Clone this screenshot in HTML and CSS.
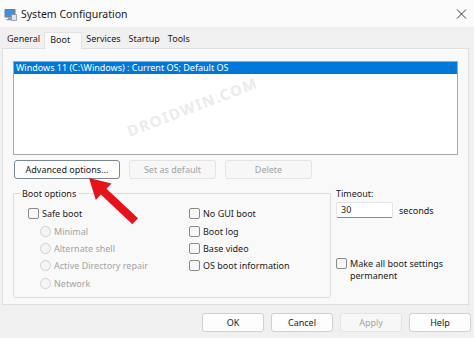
FILE: index.html
```html
<!DOCTYPE html>
<html lang="en">
<head>
    <meta charset="UTF-8">
    <meta name="viewport" content="width=device-width, initial-scale=1.0">
    <title>System Configuration</title>
    <link rel="stylesheet" href="styles.css">
</head>
<body>
    <div class="window">
        <header class="titlebar">
            <svg class="app-icon" width="13" height="13" viewBox="0 0 13 13">
                <rect x="0.5" y="1" width="11" height="8.5" rx="1" fill="#6d7f95"/>
                <rect x="1.8" y="2.2" width="8.4" height="6" fill="#3d8fe0"/>
                <rect x="4" y="9.5" width="4" height="1.5" fill="#8a97a6"/>
                <rect x="2.5" y="11" width="7" height="1.3" fill="#8a97a6"/>
                <path d="M7.5 6.5 L12.5 6.5 L12.5 12.5 L7.5 12.5 Z" fill="#dfe5ec" stroke="#7b8794" stroke-width="0.7"/>
            </svg>
            <span class="title">System Configuration</span>
            <svg class="close" width="11" height="10" viewBox="0 0 11 10">
                <path d="M1 0.5 L10 9.5 M10 0.5 L1 9.5" stroke="#222" stroke-width="0.9" fill="none"/>
            </svg>
        </header>

        <nav class="tabs">
            <span class="tab">General</span>
            <span class="tab active">Boot</span>
            <span class="tab">Services</span>
            <span class="tab">Startup</span>
            <span class="tab">Tools</span>
        </nav>

        <main class="panel">
            <div class="oslist">
                <div class="os-row selected">Windows 11 (C:\Windows) : Current OS; Default OS</div>
                <div class="watermark">DROIDWIN.COM</div>
            </div>

            <div class="os-buttons">
                <button class="btn default">Advanced options...</button>
                <button class="btn disabled">Set as default</button>
                <button class="btn disabled">Delete</button>
            </div>

            <div class="lower">
                <fieldset class="boot-options">
                    <legend>Boot options</legend>
                    <div class="columns">
                        <div class="col">
                            <div class="opt"><span class="check"></span>Safe boot</div>
                            <div class="opt sub off"><span class="radio"></span>Minimal</div>
                            <div class="opt sub off"><span class="radio"></span>Alternate shell</div>
                            <div class="opt sub off"><span class="radio"></span>Active Directory repair</div>
                            <div class="opt sub off"><span class="radio"></span>Network</div>
                        </div>
                        <div class="col col-right">
                            <div class="opt"><span class="check"></span>No GUI boot</div>
                            <div class="opt"><span class="check"></span>Boot log</div>
                            <div class="opt"><span class="check"></span>Base video</div>
                            <div class="opt"><span class="check"></span>OS boot information</div>
                        </div>
                    </div>
                </fieldset>

                <div class="side">
                    <div class="timeout-label">Timeout:</div>
                    <div class="timeout-row">
                        <div class="textbox">30</div>
                        <span class="unit">seconds</span>
                    </div>
                    <div class="permanent">
                        <span class="check"></span>
                        <span>Make all boot settings<br>permanent</span>
                    </div>
                </div>
            </div>
        </main>

        <footer class="dialog-buttons">
            <button class="btn">OK</button>
            <button class="btn">Cancel</button>
            <button class="btn disabled">Apply</button>
            <button class="btn">Help</button>
        </footer>

        <svg class="arrow" width="66" height="60" viewBox="0 0 66 60">
            <polygon points="9,8 31.5,13.4 26.5,18.7 58,48.3 52.4,54.2 20.8,24.6 15.8,30" fill="#e5141b"/>
        </svg>
    </div>
</body>
</html>
```

FILE: styles.css
```css
* {
    box-sizing: border-box;
}

body {
    margin: 0;
    padding: 0;
    font-family: "Noto Sans", "Liberation Sans", sans-serif;
    font-size: 9px;
    color: #1b1b1b;
    background-color: #f0f0f0;
}

.window {
    position: relative;
    width: 474px;
    height: 338px;
    background-color: #f0f0f0;
    overflow: hidden;
}

.titlebar {
    height: 27px;
    display: flex;
    align-items: center;
    padding-left: 4px;
    background-color: #fbfbfb;
}

.app-icon {
    margin-top: 1px;
}

.title {
    margin-left: 4px;
    font-size: 10.5px;
    color: #1a1a1a;
}

.close {
    margin-left: auto;
    margin-right: 7px;
}

.tabs {
    height: 21px;
    display: flex;
    align-items: flex-end;
    padding-left: 3px;
}

.tab {
    height: 17px;
    padding: 0 4px;
    line-height: 16px;
    position: relative;
}

.tab.active {
    line-height: 14px;
    padding: 0 11px 0 5px;
    margin-bottom: -1px;
    background-color: #f9f9f9;
    border: 1px solid #e2e2e2;
    border-bottom: none;
    z-index: 1;
}

.panel {
    height: 257px;
    margin: 0 5px 0 2px;
    padding: 12px 10px 0 10px;
    background-color: #f9f9f9;
    border: 1px solid #dedede;
}

.oslist {
    position: relative;
    height: 94px;
    background-color: #fff;
    border: 1px solid #a9a9a9;
    overflow: hidden;
}

.os-row {
    height: 12px;
    line-height: 11px;
    padding-left: 2px;
}

.os-row.selected {
    background-color: #0078d7;
    color: #fff;
}

.watermark {
    position: absolute;
    left: 110px;
    top: 60px;
    font-size: 15px;
    font-weight: bold;
    letter-spacing: 1.5px;
    color: #ebebeb;
    white-space: nowrap;
    transform: rotate(-21deg);
    transform-origin: left top;
}

.os-buttons {
    display: flex;
    gap: 9px;
    margin-top: 5px;
    padding-left: 1px;
}

.btn {
    height: 19px;
    padding: 0;
    font-family: inherit;
    font-size: 9px;
    color: #1b1b1b;
    background-color: #fdfdfd;
    border: 1px solid #d0d0d0;
    border-radius: 3px;
}

.os-buttons .btn {
    width: 87px;
}

.os-buttons .btn.default {
    width: 106px;
    border-color: #7c8794;
}

.btn.disabled {
    color: #a3a3a3;
    background-color: #f7f7f7;
    border-color: #e4e4e4;
}

.lower {
    display: flex;
    margin-top: 9px;
}

.boot-options {
    width: 318px;
    min-width: 0;
    height: 110px;
    margin: 0;
    padding: 0 0 0 14px;
    border: 1px solid #dcdcdc;
    border-radius: 2px;
    flex-shrink: 0;
}

.boot-options legend {
    margin-left: -8px;
    padding: 0 2px;
    line-height: 11px;
}

.columns {
    display: flex;
    padding-top: 6px;
}

.col {
    width: 161px;
    flex-shrink: 0;
}

.col-right {
    width: auto;
    flex: 1;
}

.opt {
    height: 17.4px;
    display: flex;
    align-items: center;
    white-space: nowrap;
}

.opt.sub {
    padding-left: 12px;
}

.opt.off {
    color: #a3a3a3;
}

.check {
    width: 11px;
    height: 11px;
    margin-right: 3px;
    background-color: #f7f7f7;
    border: 1px solid #8a8a8a;
    border-radius: 2px;
    flex-shrink: 0;
}

.radio {
    width: 11px;
    height: 11px;
    margin-right: 3px;
    background-color: #f5f5f5;
    border: 1px solid #d0d0d0;
    border-radius: 50%;
    flex-shrink: 0;
}

.side {
    flex: 1;
    margin-left: 5px;
}

.timeout-label {
    line-height: 11px;
}

.timeout-row {
    display: flex;
    align-items: center;
    margin-top: 3px;
}

.textbox {
    width: 57px;
    height: 16px;
    padding-left: 4px;
    line-height: 14px;
    background-color: #fff;
    border: 1px solid #e4e4e4;
    border-bottom-color: #8a8a8a;
    border-radius: 2px;
}

.unit {
    margin-left: 6px;
}

.permanent {
    display: flex;
    align-items: flex-start;
    margin-top: 40px;
    line-height: 12px;
}

.dialog-buttons {
    display: flex;
    justify-content: flex-end;
    gap: 7px;
    padding: 8px 3px 0 0;
}

.dialog-buttons .btn {
    width: 62px;
}

.arrow {
    position: absolute;
    left: 80px;
    top: 170px;
}
```
